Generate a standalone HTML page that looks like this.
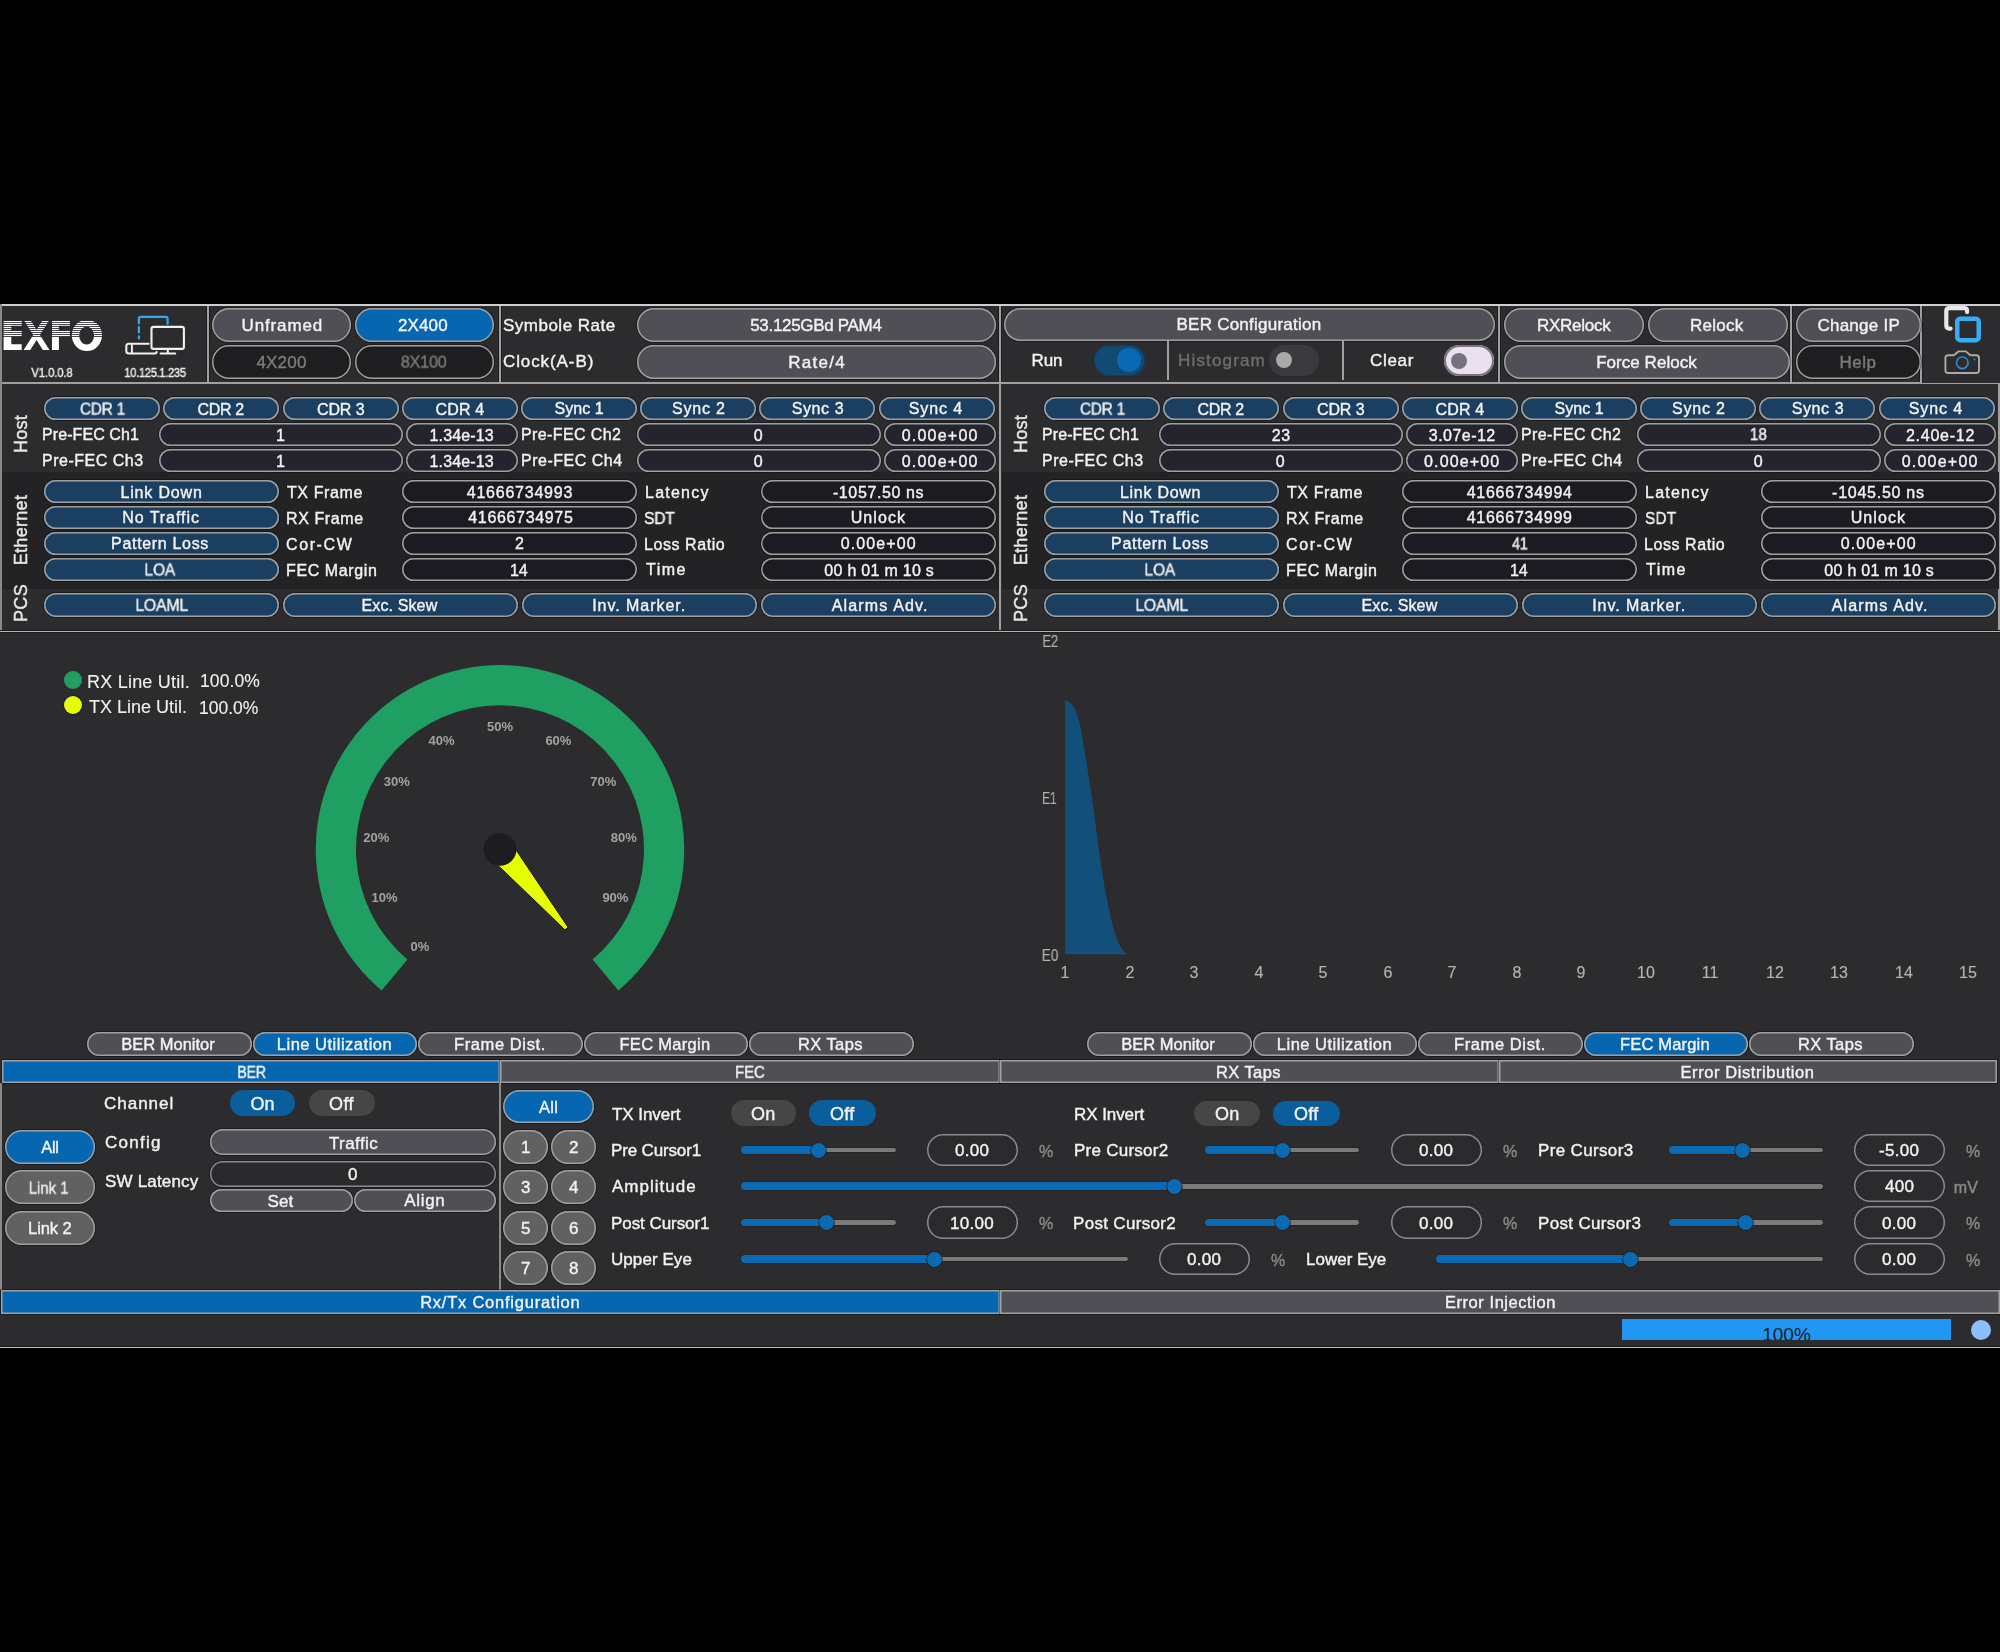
<!DOCTYPE html>
<html><head><meta charset="utf-8"><title>EXFO</title>
<style>
html,body{margin:0;padding:0;}
body{width:2000px;height:1652px;background:#000;position:relative;overflow:hidden;font-family:'Liberation Sans',sans-serif;}
.a{position:absolute;box-sizing:border-box;}
.p{display:flex;align-items:center;justify-content:center;white-space:nowrap;overflow:hidden;}
.p span,.t{-webkit-text-stroke:0.4px currentColor;will-change:transform;}
svg{will-change:transform;}
.t{white-space:nowrap;}
svg{position:absolute;left:0;top:0;}
</style></head><body>

<div class="a" style="left:0px;top:304px;width:2000px;height:1044px;background:#2c2c2f;"></div>
<div class="a" style="left:206.5px;top:306px;width:2px;height:75.5px;background:#a0a0a0;box-shadow:0 0 0 1px #1c1c20;"></div>
<div class="a" style="left:498.5px;top:306px;width:2px;height:75.5px;background:#a0a0a0;box-shadow:0 0 0 1px #1c1c20;"></div>
<div class="a" style="left:998.5px;top:306px;width:2px;height:75.5px;background:#a0a0a0;box-shadow:0 0 0 1px #1c1c20;"></div>
<div class="a" style="left:1498px;top:306px;width:2px;height:75.5px;background:#a0a0a0;box-shadow:0 0 0 1px #1c1c20;"></div>
<div class="a" style="left:1789.5px;top:306px;width:2px;height:75.5px;background:#a0a0a0;box-shadow:0 0 0 1px #1c1c20;"></div>
<div class="a" style="left:1919.5px;top:306px;width:2px;height:75.5px;background:#a0a0a0;box-shadow:0 0 0 1px #1c1c20;"></div>
<div class="a" style="left:0px;top:304px;width:2000px;height:1.5px;background:#cfcfcf;"></div>
<div class="a" style="left:0px;top:381.5px;width:1922px;height:2px;background:#a0a0a0;"></div>
<div class="a" style="left:1922px;top:382.5px;width:77.5px;height:1.5px;background:#a0a0a0;"></div>
<div class="a" style="left:0px;top:304px;width:2px;height:328px;background:#8a8a8a;"></div>
<div class="a" style="left:0px;top:1083px;width:2px;height:207px;background:#8a8a8a;"></div>
<svg width="2000" height="400" style="left:0;top:0">
<defs><mask id="lm"><rect x="0" y="337.3" width="110" height="20" fill="#fff"/><rect x="0" y="321.00" width="110" height="1.15" fill="#fff"/><rect x="0" y="323.00" width="110" height="1.15" fill="#fff"/><rect x="0" y="325.00" width="110" height="1.15" fill="#fff"/><rect x="0" y="327.00" width="110" height="1.15" fill="#fff"/><rect x="0" y="329.00" width="110" height="1.15" fill="#fff"/><rect x="0" y="331.00" width="110" height="1.15" fill="#fff"/><rect x="0" y="333.00" width="110" height="1.15" fill="#fff"/><rect x="0" y="335.00" width="110" height="1.15" fill="#fff"/><rect x="0" y="337.00" width="110" height="1.15" fill="#fff"/></mask></defs>
<g mask="url(#lm)" fill="#fff">
<path d="M3.6 320.25 H21.7 V325.75 H11.3 V331 H21.7 V336.5 H11.3 V344.2 H21.7 V350 H3.6 Z"/>
<path d="M23.9 320.25 H30.5 L49.5 350 H42.9 Z"/>
<path d="M42.6 320.25 H49.2 L30.2 350 H23.65 Z"/>
<path d="M52 320.25 H69.9 V325.75 H58.9 V331 H69.9 V336.5 H58.9 V350 H52 Z"/>
<path fill-rule="evenodd" d="M71.8 335.35 A15.1 15.65 0 1 0 102 335.35 A15.1 15.65 0 1 0 71.8 335.35 Z M79.2 335.55 A7.42 8.95 0 1 0 94.05 335.55 A7.42 8.95 0 1 0 79.2 335.55 Z"/>
</g>
<g fill="none" stroke-linecap="round" stroke-linejoin="round">
<path d="M138.9 323.3 V318.8 Q138.9 316.8 140.9 316.8 H165.6 Q167.6 316.8 167.6 318.8 V323.8" stroke="#2eaaf0" stroke-width="2.2"/>
<path d="M138.9 327 V332.5 M138.9 336.3 V338.4" stroke="#2eaaf0" stroke-width="2.2"/>
<rect x="151.5" y="326.9" width="32.4" height="22" rx="2" stroke="#f0f0f0" stroke-width="2.1"/>
<path d="M167.8 349.5 V353.4 M160.6 353.5 H175.2" stroke="#f0f0f0" stroke-width="2.1"/>
<path d="M148.6 343.7 H128.8 Q126.3 343.7 126.3 346.2 V351 Q126.3 353.5 128.8 353.5 H155 Q156.4 353.5 156.6 352" stroke="#f0f0f0" stroke-width="2.1"/>
<path d="M131.9 344 V353" stroke="#f0f0f0" stroke-width="1.9"/>
</g>
</svg>
<div class="a t" style="left:-247.75px;width:600px;text-align:center;top:366px;height:15px;line-height:15px;font-size:12.5px;color:#eaeaea;letter-spacing:-0.158px;font-weight:400;transform:scaleX(0.9114);transform-origin:center;">V1.0.0.8</div>
<div class="a t" style="left:-144.8px;width:600px;text-align:center;top:366px;height:15px;line-height:15px;font-size:12.5px;color:#eaeaea;letter-spacing:-0.373px;font-weight:400;transform:scaleX(0.8957);transform-origin:center;">10.125.1.235</div>
<div class="a p" style="left:212px;top:308px;width:139px;height:34px;background:#504f55;border-radius:17px;box-shadow:inset 0 0 0 1.5px #a0a0a0,0 0 0 1px rgba(0,0,0,.35);"><span style="font-size:17px;color:#f2f2f2;letter-spacing:0.863px;transform:translate(0.50px,1.35px);">Unframed</span></div>
<div class="a p" style="left:354.5px;top:308px;width:139.5px;height:34px;background:#0766b0;border-radius:17px;box-shadow:inset 0 0 0 1.5px #a0a0a0,0 0 0 1px rgba(0,0,0,.35);"><span style="font-size:17px;color:#f2f2f2;letter-spacing:0.150px;transform:translate(-1.10px,1.35px);">2X400</span></div>
<div class="a p" style="left:212px;top:345px;width:139px;height:33.5px;background:#1e1e20;border-radius:16.75px;box-shadow:inset 0 0 0 1.5px #a0a0a0,0 0 0 1px rgba(0,0,0,.35);"><span style="font-size:17px;color:#7c7c7c;letter-spacing:0.200px;transform:translate(0.40px,1.10px);">4X200</span></div>
<div class="a p" style="left:354.5px;top:345px;width:139.5px;height:33.5px;background:#1e1e20;border-radius:16.75px;box-shadow:inset 0 0 0 1.5px #a0a0a0,0 0 0 1px rgba(0,0,0,.35);"><span style="font-size:17px;color:#7c7c7c;letter-spacing:-0.350px;transform:translate(-1.10px,0.60px) scaleX(0.9646);">8X100</span></div>
<div class="a t" style="left:502.7px;top:316.27px;height:20.4px;line-height:20.4px;font-size:17px;color:#f2f2f2;letter-spacing:0.490px;font-weight:400;">Symbole Rate</div>
<div class="a t" style="left:502.5px;top:352.27px;height:20.4px;line-height:20.4px;font-size:17px;color:#f2f2f2;letter-spacing:0.902px;font-weight:400;">Clock(A-B)</div>
<div class="a p" style="left:637px;top:308px;width:359px;height:34px;background:#504f55;border-radius:17px;box-shadow:inset 0 0 0 1.5px #a0a0a0,0 0 0 1px rgba(0,0,0,.35);"><span style="font-size:17px;color:#f2f2f2;letter-spacing:-0.315px;transform:translate(-0.80px,1.35px);">53.125GBd PAM4</span></div>
<div class="a p" style="left:637px;top:345px;width:359px;height:33.5px;background:#504f55;border-radius:16.75px;box-shadow:inset 0 0 0 1.5px #a0a0a0,0 0 0 1px rgba(0,0,0,.35);"><span style="font-size:17px;color:#f2f2f2;letter-spacing:1.280px;transform:translate(0.20px,1.10px);">Rate/4</span></div>
<div class="a p" style="left:1004px;top:307.5px;width:491px;height:33.5px;background:#504f55;border-radius:16.75px;box-shadow:inset 0 0 0 1.5px #a0a0a0,0 0 0 1px rgba(0,0,0,.35);"><span style="font-size:17px;color:#f2f2f2;letter-spacing:0.238px;transform:translate(-0.50px,1.07px);">BER Configuration</span></div>
<div class="a" style="left:1166.5px;top:341px;width:2px;height:39px;background:#a0a0a0;"></div>
<div class="a" style="left:1342px;top:341px;width:2px;height:39px;background:#a0a0a0;"></div>
<div class="a t" style="left:747.1px;width:600px;text-align:center;top:350.8px;height:20.4px;line-height:20.4px;font-size:17px;color:#f2f2f2;letter-spacing:-0.100px;font-weight:400;">Run</div>
<div class="a" style="left:1094px;top:344.5px;width:51px;height:31px;border-radius:16px;background:#134a73;box-shadow:inset 0 0 0 1px #0f3d60;"></div>
<div class="a" style="left:1117px;top:348px;width:24px;height:24px;border-radius:50%;background:#0a69b3;"></div>
<div class="a t" style="left:921.6px;width:600px;text-align:center;top:351.27px;height:20.4px;line-height:20.4px;font-size:17px;color:#6e6e6e;letter-spacing:1.150px;font-weight:400;">Histogram</div>
<div class="a" style="left:1269px;top:344.5px;width:50px;height:31px;border-radius:16px;background:#3a393e;"></div>
<div class="a" style="left:1276px;top:352px;width:16px;height:16px;border-radius:50%;background:#a9a9a9;"></div>
<div class="a t" style="left:1091.5px;width:600px;text-align:center;top:350.8px;height:20.4px;line-height:20.4px;font-size:17px;color:#f2f2f2;letter-spacing:0.700px;font-weight:400;">Clear</div>
<div class="a" style="left:1444px;top:345px;width:50px;height:30.5px;border-radius:16px;background:#e9e1ee;box-shadow:inset 0 0 0 2px #7a7480;"></div>
<div class="a" style="left:1451px;top:352.5px;width:16px;height:16px;border-radius:50%;background:#77717d;"></div>
<div class="a p" style="left:1504px;top:308px;width:140px;height:34px;background:#504f55;border-radius:17px;box-shadow:inset 0 0 0 1.5px #a0a0a0,0 0 0 1px rgba(0,0,0,.35);"><span style="font-size:17px;color:#f2f2f2;letter-spacing:-0.271px;transform:translate(0.00px,1.35px);">RXRelock</span></div>
<div class="a p" style="left:1647.5px;top:308px;width:140.5px;height:34px;background:#504f55;border-radius:17px;box-shadow:inset 0 0 0 1.5px #a0a0a0,0 0 0 1px rgba(0,0,0,.35);"><span style="font-size:17px;color:#f2f2f2;letter-spacing:0.260px;transform:translate(-1.10px,1.35px);">Relock</span></div>
<div class="a p" style="left:1504px;top:345px;width:286px;height:33.5px;background:#504f55;border-radius:16.75px;box-shadow:inset 0 0 0 1.5px #a0a0a0,0 0 0 1px rgba(0,0,0,.35);"><span style="font-size:17px;color:#f2f2f2;letter-spacing:0.038px;transform:translate(-0.80px,1.10px);">Force Relock</span></div>
<div class="a p" style="left:1796px;top:308px;width:124.5px;height:34px;background:#504f55;border-radius:17px;box-shadow:inset 0 0 0 1.5px #a0a0a0,0 0 0 1px rgba(0,0,0,.35);"><span style="font-size:17px;color:#f2f2f2;letter-spacing:0.250px;transform:translate(0.40px,0.82px);">Change IP</span></div>
<div class="a p" style="left:1796px;top:345px;width:124.5px;height:33.5px;background:#1e1e20;border-radius:16.75px;box-shadow:inset 0 0 0 1.5px #a0a0a0,0 0 0 1px rgba(0,0,0,.35);"><span style="font-size:17px;color:#7c7c7c;letter-spacing:0.570px;transform:translate(-0.60px,0.57px);">Help</span></div>
<svg width="2000" height="400" style="left:0;top:0">
<path d="M1950.6 328.6 H1949.3 Q1946.3 328.6 1946.3 325.6 V311.1 Q1946.3 308.1 1949.3 308.1 H1964.1 Q1967.1 308.1 1967.1 311.1 V312.1" fill="none" stroke="#e8e8e8" stroke-width="4.2" stroke-linecap="round"/>
<rect x="1957.25" y="318.65" width="21.5" height="21.5" rx="3" fill="#2c2c2f" stroke="#38adf5" stroke-width="4.5"/>
<path d="M1945.4 358 Q1945.4 355.2 1948.2 355.2 H1953.8 L1958.4 351.4 H1965.9 L1970.3 355.2 H1976.2 Q1979 355.2 1979 358 V370.2 Q1979 373 1976.2 373 H1948.2 Q1945.4 373 1945.4 370.2 Z" fill="none" stroke="#ababab" stroke-width="1.9" stroke-linejoin="round"/>
<circle cx="1962.3" cy="362.8" r="5.8" fill="none" stroke="#2a90d8" stroke-width="1.6"/>
<circle cx="1974.5" cy="359.5" r="0.9" fill="#2a90d8"/>
</svg>
<div class="a" style="left:999px;top:383px;width:2px;height:248px;background:#a0a0a0;"></div>
<div class="a" style="left:1997.5px;top:382.5px;width:2px;height:249px;background:#a0a0a0;"></div>
<div class="a" style="left:0px;top:631px;width:2000px;height:1px;background:#b4b4b4;box-shadow:0 1px 0 #1c1c1f,0 -1px 0 #1c1c1f;"></div>
<div class="a" style="left:2px;top:472px;width:997px;height:117px;background:#232325;"></div>
<div class="a t" style="left:-39px;top:423.5px;width:120px;height:20px;line-height:20px;text-align:center;font-size:18px;color:#e6e6e6;letter-spacing:0.3px;transform:rotate(-90deg);">Host</div>
<div class="a t" style="left:-39px;top:520px;width:120px;height:20px;line-height:20px;text-align:center;font-size:18px;color:#e6e6e6;letter-spacing:0.3px;transform:rotate(-90deg);">Ethernet</div>
<div class="a t" style="left:-39px;top:593px;width:120px;height:20px;line-height:20px;text-align:center;font-size:18px;color:#e6e6e6;letter-spacing:0.3px;transform:rotate(-90deg);">PCS</div>
<div class="a p" style="left:44.1px;top:396.5px;width:116.1px;height:23.5px;background:#1b3f60;border-radius:11.75px;box-shadow:inset 0 0 0 1.5px #a0a0a0,0 0 0 1px rgba(0,0,0,.35);"><span style="font-size:16px;color:#f2f2f2;letter-spacing:-0.250px;transform:translate(0.10px,1.60px) scaleX(0.9653);">CDR 1</span></div>
<div class="a p" style="left:163.3px;top:396.5px;width:116.1px;height:23.5px;background:#1b3f60;border-radius:11.75px;box-shadow:inset 0 0 0 1.5px #a0a0a0,0 0 0 1px rgba(0,0,0,.35);"><span style="font-size:16px;color:#f2f2f2;letter-spacing:-0.352px;transform:translate(-0.43px,1.60px);">CDR 2</span></div>
<div class="a p" style="left:282.5px;top:396.5px;width:116.1px;height:23.5px;background:#1b3f60;border-radius:11.75px;box-shadow:inset 0 0 0 1.5px #a0a0a0,0 0 0 1px rgba(0,0,0,.35);"><span style="font-size:16px;color:#f2f2f2;letter-spacing:-0.102px;transform:translate(-0.05px,1.60px);">CDR 3</span></div>
<div class="a p" style="left:401.7px;top:396.5px;width:116.1px;height:23.5px;background:#1b3f60;border-radius:11.75px;box-shadow:inset 0 0 0 1.5px #a0a0a0,0 0 0 1px rgba(0,0,0,.35);"><span style="font-size:16px;color:#f2f2f2;letter-spacing:0.150px;transform:translate(0.50px,1.60px);">CDR 4</span></div>
<div class="a p" style="left:520.9px;top:396.5px;width:116.1px;height:23.5px;background:#1b3f60;border-radius:11.75px;box-shadow:inset 0 0 0 1.5px #a0a0a0,0 0 0 1px rgba(0,0,0,.35);"><span style="font-size:16px;color:#f2f2f2;letter-spacing:0.080px;transform:translate(0.40px,1.22px);">Sync 1</span></div>
<div class="a p" style="left:640.1px;top:396.5px;width:116.1px;height:23.5px;background:#1b3f60;border-radius:11.75px;box-shadow:inset 0 0 0 1.5px #a0a0a0,0 0 0 1px rgba(0,0,0,.35);"><span style="font-size:16px;color:#f2f2f2;letter-spacing:0.800px;transform:translate(1.00px,1.22px);">Sync 2</span></div>
<div class="a p" style="left:759.3px;top:396.5px;width:116.1px;height:23.5px;background:#1b3f60;border-radius:11.75px;box-shadow:inset 0 0 0 1.5px #a0a0a0,0 0 0 1px rgba(0,0,0,.35);"><span style="font-size:16px;color:#f2f2f2;letter-spacing:0.600px;transform:translate(0.70px,1.22px);">Sync 3</span></div>
<div class="a p" style="left:878.5px;top:396.5px;width:116.1px;height:23.5px;background:#1b3f60;border-radius:11.75px;box-shadow:inset 0 0 0 1.5px #a0a0a0,0 0 0 1px rgba(0,0,0,.35);"><span style="font-size:16px;color:#f2f2f2;letter-spacing:0.920px;transform:translate(-0.30px,1.22px);">Sync 4</span></div>
<div class="a t" style="left:42px;top:424.9px;height:19.2px;line-height:19.2px;font-size:16px;color:#f2f2f2;letter-spacing:0.080px;font-weight:400;">Pre-FEC Ch1</div>
<div class="a p" style="left:158.5px;top:422.5px;width:244px;height:23.5px;background:#25232e;border-radius:11.75px;box-shadow:inset 0 0 0 1.5px #a0a0a0,0 0 0 1px rgba(0,0,0,.35);"><span style="font-size:16px;color:#f2f2f2;letter-spacing:0.200px;transform:translate(0.00px,1.60px);">1</span></div>
<div class="a p" style="left:405.5px;top:422.5px;width:112px;height:23.5px;background:#25232e;border-radius:11.75px;box-shadow:inset 0 0 0 1.5px #a0a0a0,0 0 0 1px rgba(0,0,0,.35);"><span style="font-size:16px;color:#f2f2f2;letter-spacing:0.143px;transform:translate(0.50px,1.60px);">1.34e-13</span></div>
<div class="a t" style="left:520.7px;top:424.9px;height:19.2px;line-height:19.2px;font-size:16px;color:#f2f2f2;letter-spacing:0.380px;font-weight:400;">Pre-FEC Ch2</div>
<div class="a p" style="left:637px;top:422.5px;width:243.5px;height:23.5px;background:#25232e;border-radius:11.75px;box-shadow:inset 0 0 0 1.5px #a0a0a0,0 0 0 1px rgba(0,0,0,.35);"><span style="font-size:16px;color:#f2f2f2;letter-spacing:0.200px;transform:translate(-0.30px,1.60px);">0</span></div>
<div class="a p" style="left:883.5px;top:422.5px;width:112.5px;height:23.5px;background:#25232e;border-radius:11.75px;box-shadow:inset 0 0 0 1.5px #a0a0a0,0 0 0 1px rgba(0,0,0,.35);"><span style="font-size:16px;color:#f2f2f2;letter-spacing:1.224px;transform:translate(0.70px,1.60px);">0.00e+00</span></div>
<div class="a t" style="left:41.5px;top:450.9px;height:19.2px;line-height:19.2px;font-size:16px;color:#f2f2f2;letter-spacing:0.500px;font-weight:400;">Pre-FEC Ch3</div>
<div class="a p" style="left:158.5px;top:448.5px;width:244px;height:23.5px;background:#25232e;border-radius:11.75px;box-shadow:inset 0 0 0 1.5px #a0a0a0,0 0 0 1px rgba(0,0,0,.35);"><span style="font-size:16px;color:#f2f2f2;letter-spacing:0.200px;transform:translate(0.00px,1.60px);">1</span></div>
<div class="a p" style="left:405.5px;top:448.5px;width:112px;height:23.5px;background:#25232e;border-radius:11.75px;box-shadow:inset 0 0 0 1.5px #a0a0a0,0 0 0 1px rgba(0,0,0,.35);"><span style="font-size:16px;color:#f2f2f2;letter-spacing:0.143px;transform:translate(0.50px,1.60px);">1.34e-13</span></div>
<div class="a t" style="left:521.3px;top:450.9px;height:19.2px;line-height:19.2px;font-size:16px;color:#f2f2f2;letter-spacing:0.500px;font-weight:400;">Pre-FEC Ch4</div>
<div class="a p" style="left:637px;top:448.5px;width:243.5px;height:23.5px;background:#25232e;border-radius:11.75px;box-shadow:inset 0 0 0 1.5px #a0a0a0,0 0 0 1px rgba(0,0,0,.35);"><span style="font-size:16px;color:#f2f2f2;letter-spacing:0.200px;transform:translate(-0.30px,1.60px);">0</span></div>
<div class="a p" style="left:883.5px;top:448.5px;width:112.5px;height:23.5px;background:#25232e;border-radius:11.75px;box-shadow:inset 0 0 0 1.5px #a0a0a0,0 0 0 1px rgba(0,0,0,.35);"><span style="font-size:16px;color:#f2f2f2;letter-spacing:1.224px;transform:translate(0.70px,1.60px);">0.00e+00</span></div>
<div class="a p" style="left:43.5px;top:480px;width:235px;height:23.3px;background:#1b3f60;border-radius:11.65px;box-shadow:inset 0 0 0 1.5px #a0a0a0,0 0 0 1px rgba(0,0,0,.35);"><span style="font-size:16px;color:#f2f2f2;letter-spacing:0.838px;transform:translate(0.40px,1.20px);">Link Down</span></div>
<div class="a t" style="left:287.18px;top:482.9px;height:19.2px;line-height:19.2px;font-size:16px;color:#f2f2f2;letter-spacing:0.599px;font-weight:400;">TX Frame</div>
<div class="a p" style="left:402px;top:480px;width:234.5px;height:23.3px;background:#1c1b21;border-radius:11.65px;box-shadow:inset 0 0 0 1.5px #a0a0a0,0 0 0 1px rgba(0,0,0,.35);"><span style="font-size:16px;color:#f2f2f2;letter-spacing:0.760px;transform:translate(0.80px,1.20px);">41666734993</span></div>
<div class="a t" style="left:644.6px;top:482.52px;height:19.2px;line-height:19.2px;font-size:16px;color:#f2f2f2;letter-spacing:1.234px;font-weight:400;">Latency</div>
<div class="a p" style="left:761px;top:480px;width:235px;height:23.3px;background:#1c1b21;border-radius:11.65px;box-shadow:inset 0 0 0 1.5px #a0a0a0,0 0 0 1px rgba(0,0,0,.35);"><span style="font-size:16px;color:#f2f2f2;letter-spacing:0.620px;transform:translate(-0.10px,1.20px);">-1057.50 ns</span></div>
<div class="a p" style="left:43.5px;top:505.9px;width:235px;height:23.3px;background:#1b3f60;border-radius:11.65px;box-shadow:inset 0 0 0 1.5px #a0a0a0,0 0 0 1px rgba(0,0,0,.35);"><span style="font-size:16px;color:#f2f2f2;letter-spacing:0.945px;transform:translate(0.20px,0.30px);">No Traffic</span></div>
<div class="a t" style="left:286.18px;top:508.9px;height:19.2px;line-height:19.2px;font-size:16px;color:#f2f2f2;letter-spacing:0.599px;font-weight:400;">RX Frame</div>
<div class="a p" style="left:402px;top:505.9px;width:234.5px;height:23.3px;background:#1c1b21;border-radius:11.65px;box-shadow:inset 0 0 0 1.5px #a0a0a0,0 0 0 1px rgba(0,0,0,.35);"><span style="font-size:16px;color:#f2f2f2;letter-spacing:0.660px;transform:translate(1.30px,0.30px);">41666734975</span></div>
<div class="a t" style="left:644.2px;top:508.9px;height:19.2px;line-height:19.2px;font-size:16px;color:#f2f2f2;letter-spacing:-0.200px;font-weight:400;transform:scaleX(0.9767);transform-origin:left;">SDT</div>
<div class="a p" style="left:761px;top:505.9px;width:235px;height:23.3px;background:#1c1b21;border-radius:11.65px;box-shadow:inset 0 0 0 1.5px #a0a0a0,0 0 0 1px rgba(0,0,0,.35);"><span style="font-size:16px;color:#f2f2f2;letter-spacing:1.080px;transform:translate(-0.30px,0.30px);">Unlock</span></div>
<div class="a p" style="left:43.5px;top:531.8px;width:235px;height:23.3px;background:#1b3f60;border-radius:11.65px;box-shadow:inset 0 0 0 1.5px #a0a0a0,0 0 0 1px rgba(0,0,0,.35);"><span style="font-size:16px;color:#f2f2f2;letter-spacing:0.671px;transform:translate(-0.90px,1.40px);">Pattern Loss</span></div>
<div class="a t" style="left:285.6px;top:534.9px;height:19.2px;line-height:19.2px;font-size:16px;color:#f2f2f2;letter-spacing:1.600px;font-weight:400;">Cor-CW</div>
<div class="a p" style="left:402px;top:531.8px;width:234.5px;height:23.3px;background:#1c1b21;border-radius:11.65px;box-shadow:inset 0 0 0 1.5px #a0a0a0,0 0 0 1px rgba(0,0,0,.35);"><span style="font-size:16px;color:#f2f2f2;letter-spacing:0.400px;transform:translate(0.00px,1.40px);">2</span></div>
<div class="a t" style="left:643.8px;top:534.9px;height:19.2px;line-height:19.2px;font-size:16px;color:#f2f2f2;letter-spacing:0.564px;font-weight:400;">Loss Ratio</div>
<div class="a p" style="left:761px;top:531.8px;width:235px;height:23.3px;background:#1c1b21;border-radius:11.65px;box-shadow:inset 0 0 0 1.5px #a0a0a0,0 0 0 1px rgba(0,0,0,.35);"><span style="font-size:16px;color:#f2f2f2;letter-spacing:1.116px;transform:translate(0.70px,1.40px);">0.00e+00</span></div>
<div class="a p" style="left:43.5px;top:557.7px;width:235px;height:23.3px;background:#1b3f60;border-radius:11.65px;box-shadow:inset 0 0 0 1.5px #a0a0a0,0 0 0 1px rgba(0,0,0,.35);"><span style="font-size:16px;color:#f2f2f2;letter-spacing:0.000px;transform:translate(-1.20px,1.50px) scaleX(0.9667);">LOA</span></div>
<div class="a t" style="left:285.5px;top:560.52px;height:19.2px;line-height:19.2px;font-size:16px;color:#f2f2f2;letter-spacing:0.607px;font-weight:400;">FEC Margin</div>
<div class="a p" style="left:402px;top:557.7px;width:234.5px;height:23.3px;background:#1c1b21;border-radius:11.65px;box-shadow:inset 0 0 0 1.5px #a0a0a0,0 0 0 1px rgba(0,0,0,.35);"><span style="font-size:16px;color:#f2f2f2;letter-spacing:-0.200px;transform:translate(-0.90px,1.50px);">14</span></div>
<div class="a t" style="left:645.7px;top:559.9px;height:19.2px;line-height:19.2px;font-size:16px;color:#f2f2f2;letter-spacing:1.469px;font-weight:400;">Time</div>
<div class="a p" style="left:761px;top:557.7px;width:235px;height:23.3px;background:#1c1b21;border-radius:11.65px;box-shadow:inset 0 0 0 1.5px #a0a0a0,0 0 0 1px rgba(0,0,0,.35);"><span style="font-size:16px;color:#f2f2f2;letter-spacing:0.285px;transform:translate(0.30px,1.50px);">00 h 01 m 10 s</span></div>
<div class="a p" style="left:43.5px;top:593px;width:235px;height:24px;background:#1b3f60;border-radius:12px;box-shadow:inset 0 0 0 1.5px #a0a0a0,0 0 0 1px rgba(0,0,0,.35);"><span style="font-size:16px;color:#f2f2f2;letter-spacing:-0.275px;transform:translate(0.20px,0.85px) scaleX(0.9941);">LOAML</span></div>
<div class="a p" style="left:282.5px;top:593px;width:235px;height:24px;background:#1b3f60;border-radius:12px;box-shadow:inset 0 0 0 1.5px #a0a0a0,0 0 0 1px rgba(0,0,0,.35);"><span style="font-size:16px;color:#f2f2f2;letter-spacing:0.126px;transform:translate(-0.50px,1.35px);">Exc. Skew</span></div>
<div class="a p" style="left:521.5px;top:593px;width:235px;height:24px;background:#1b3f60;border-radius:12px;box-shadow:inset 0 0 0 1.5px #a0a0a0,0 0 0 1px rgba(0,0,0,.35);"><span style="font-size:16px;color:#f2f2f2;letter-spacing:0.966px;transform:translate(0.20px,1.35px);">Inv. Marker.</span></div>
<div class="a p" style="left:761px;top:593px;width:235px;height:24px;background:#1b3f60;border-radius:12px;box-shadow:inset 0 0 0 1.5px #a0a0a0,0 0 0 1px rgba(0,0,0,.35);"><span style="font-size:16px;color:#f2f2f2;letter-spacing:1.160px;transform:translate(1.70px,1.35px);">Alarms Adv.</span></div>
<div class="a" style="left:1002px;top:472px;width:997px;height:117px;background:#232325;"></div>
<div class="a t" style="left:961px;top:423.5px;width:120px;height:20px;line-height:20px;text-align:center;font-size:18px;color:#e6e6e6;letter-spacing:0.3px;transform:rotate(-90deg);">Host</div>
<div class="a t" style="left:961px;top:520px;width:120px;height:20px;line-height:20px;text-align:center;font-size:18px;color:#e6e6e6;letter-spacing:0.3px;transform:rotate(-90deg);">Ethernet</div>
<div class="a t" style="left:961px;top:593px;width:120px;height:20px;line-height:20px;text-align:center;font-size:18px;color:#e6e6e6;letter-spacing:0.3px;transform:rotate(-90deg);">PCS</div>
<div class="a p" style="left:1044.1px;top:396.5px;width:116.1px;height:23.5px;background:#1b3f60;border-radius:11.75px;box-shadow:inset 0 0 0 1.5px #a0a0a0,0 0 0 1px rgba(0,0,0,.35);"><span style="font-size:16px;color:#f2f2f2;letter-spacing:-0.250px;transform:translate(0.10px,1.60px) scaleX(0.9653);">CDR 1</span></div>
<div class="a p" style="left:1163.3px;top:396.5px;width:116.1px;height:23.5px;background:#1b3f60;border-radius:11.75px;box-shadow:inset 0 0 0 1.5px #a0a0a0,0 0 0 1px rgba(0,0,0,.35);"><span style="font-size:16px;color:#f2f2f2;letter-spacing:-0.352px;transform:translate(-0.43px,1.60px);">CDR 2</span></div>
<div class="a p" style="left:1282.5px;top:396.5px;width:116.1px;height:23.5px;background:#1b3f60;border-radius:11.75px;box-shadow:inset 0 0 0 1.5px #a0a0a0,0 0 0 1px rgba(0,0,0,.35);"><span style="font-size:16px;color:#f2f2f2;letter-spacing:-0.102px;transform:translate(-0.05px,1.60px);">CDR 3</span></div>
<div class="a p" style="left:1401.7px;top:396.5px;width:116.1px;height:23.5px;background:#1b3f60;border-radius:11.75px;box-shadow:inset 0 0 0 1.5px #a0a0a0,0 0 0 1px rgba(0,0,0,.35);"><span style="font-size:16px;color:#f2f2f2;letter-spacing:0.150px;transform:translate(0.50px,1.60px);">CDR 4</span></div>
<div class="a p" style="left:1520.9px;top:396.5px;width:116.1px;height:23.5px;background:#1b3f60;border-radius:11.75px;box-shadow:inset 0 0 0 1.5px #a0a0a0,0 0 0 1px rgba(0,0,0,.35);"><span style="font-size:16px;color:#f2f2f2;letter-spacing:0.080px;transform:translate(0.40px,1.22px);">Sync 1</span></div>
<div class="a p" style="left:1640.1px;top:396.5px;width:116.1px;height:23.5px;background:#1b3f60;border-radius:11.75px;box-shadow:inset 0 0 0 1.5px #a0a0a0,0 0 0 1px rgba(0,0,0,.35);"><span style="font-size:16px;color:#f2f2f2;letter-spacing:0.800px;transform:translate(1.00px,1.22px);">Sync 2</span></div>
<div class="a p" style="left:1759.3px;top:396.5px;width:116.1px;height:23.5px;background:#1b3f60;border-radius:11.75px;box-shadow:inset 0 0 0 1.5px #a0a0a0,0 0 0 1px rgba(0,0,0,.35);"><span style="font-size:16px;color:#f2f2f2;letter-spacing:0.600px;transform:translate(0.70px,1.22px);">Sync 3</span></div>
<div class="a p" style="left:1878.5px;top:396.5px;width:116.1px;height:23.5px;background:#1b3f60;border-radius:11.75px;box-shadow:inset 0 0 0 1.5px #a0a0a0,0 0 0 1px rgba(0,0,0,.35);"><span style="font-size:16px;color:#f2f2f2;letter-spacing:0.920px;transform:translate(-0.30px,1.22px);">Sync 4</span></div>
<div class="a t" style="left:1042px;top:424.9px;height:19.2px;line-height:19.2px;font-size:16px;color:#f2f2f2;letter-spacing:0.080px;font-weight:400;">Pre-FEC Ch1</div>
<div class="a p" style="left:1158.5px;top:422.5px;width:244px;height:23.5px;background:#25232e;border-radius:11.75px;box-shadow:inset 0 0 0 1.5px #a0a0a0,0 0 0 1px rgba(0,0,0,.35);"><span style="font-size:16px;color:#f2f2f2;letter-spacing:0.600px;transform:translate(0.80px,1.60px);">23</span></div>
<div class="a p" style="left:1405.5px;top:422.5px;width:112px;height:23.5px;background:#25232e;border-radius:11.75px;box-shadow:inset 0 0 0 1.5px #a0a0a0,0 0 0 1px rgba(0,0,0,.35);"><span style="font-size:16px;color:#f2f2f2;letter-spacing:0.459px;transform:translate(0.80px,1.60px);">3.07e-12</span></div>
<div class="a t" style="left:1520.7px;top:424.9px;height:19.2px;line-height:19.2px;font-size:16px;color:#f2f2f2;letter-spacing:0.380px;font-weight:400;">Pre-FEC Ch2</div>
<div class="a p" style="left:1637px;top:422.5px;width:243.5px;height:23.5px;background:#25232e;border-radius:11.75px;box-shadow:inset 0 0 0 1.5px #a0a0a0,0 0 0 1px rgba(0,0,0,.35);"><span style="font-size:16px;color:#f2f2f2;letter-spacing:0.100px;transform:translate(-0.60px,1.10px) scaleX(0.9562);">18</span></div>
<div class="a p" style="left:1883.5px;top:422.5px;width:112.5px;height:23.5px;background:#25232e;border-radius:11.75px;box-shadow:inset 0 0 0 1.5px #a0a0a0,0 0 0 1px rgba(0,0,0,.35);"><span style="font-size:16px;color:#f2f2f2;letter-spacing:0.765px;transform:translate(0.90px,1.60px);">2.40e-12</span></div>
<div class="a t" style="left:1041.5px;top:450.9px;height:19.2px;line-height:19.2px;font-size:16px;color:#f2f2f2;letter-spacing:0.500px;font-weight:400;">Pre-FEC Ch3</div>
<div class="a p" style="left:1158.5px;top:448.5px;width:244px;height:23.5px;background:#25232e;border-radius:11.75px;box-shadow:inset 0 0 0 1.5px #a0a0a0,0 0 0 1px rgba(0,0,0,.35);"><span style="font-size:16px;color:#f2f2f2;letter-spacing:0.200px;transform:translate(-0.30px,1.60px);">0</span></div>
<div class="a p" style="left:1405.5px;top:448.5px;width:112px;height:23.5px;background:#25232e;border-radius:11.75px;box-shadow:inset 0 0 0 1.5px #a0a0a0,0 0 0 1px rgba(0,0,0,.35);"><span style="font-size:16px;color:#f2f2f2;letter-spacing:1.143px;transform:translate(1.00px,1.60px);">0.00e+00</span></div>
<div class="a t" style="left:1521.3px;top:450.9px;height:19.2px;line-height:19.2px;font-size:16px;color:#f2f2f2;letter-spacing:0.500px;font-weight:400;">Pre-FEC Ch4</div>
<div class="a p" style="left:1637px;top:448.5px;width:243.5px;height:23.5px;background:#25232e;border-radius:11.75px;box-shadow:inset 0 0 0 1.5px #a0a0a0,0 0 0 1px rgba(0,0,0,.35);"><span style="font-size:16px;color:#f2f2f2;letter-spacing:0.200px;transform:translate(-0.30px,1.60px);">0</span></div>
<div class="a p" style="left:1883.5px;top:448.5px;width:112.5px;height:23.5px;background:#25232e;border-radius:11.75px;box-shadow:inset 0 0 0 1.5px #a0a0a0,0 0 0 1px rgba(0,0,0,.35);"><span style="font-size:16px;color:#f2f2f2;letter-spacing:1.224px;transform:translate(0.70px,1.60px);">0.00e+00</span></div>
<div class="a p" style="left:1043.5px;top:480px;width:235px;height:23.3px;background:#1b3f60;border-radius:11.65px;box-shadow:inset 0 0 0 1.5px #a0a0a0,0 0 0 1px rgba(0,0,0,.35);"><span style="font-size:16px;color:#f2f2f2;letter-spacing:0.737px;transform:translate(-0.10px,1.20px);">Link Down</span></div>
<div class="a t" style="left:1287.42px;top:482.9px;height:19.2px;line-height:19.2px;font-size:16px;color:#f2f2f2;letter-spacing:0.599px;font-weight:400;">TX Frame</div>
<div class="a p" style="left:1402px;top:480px;width:234.5px;height:23.3px;background:#1c1b21;border-radius:11.65px;box-shadow:inset 0 0 0 1.5px #a0a0a0,0 0 0 1px rgba(0,0,0,.35);"><span style="font-size:16px;color:#f2f2f2;letter-spacing:0.740px;transform:translate(0.70px,1.20px);">41666734994</span></div>
<div class="a t" style="left:1644.6px;top:482.52px;height:19.2px;line-height:19.2px;font-size:16px;color:#f2f2f2;letter-spacing:1.234px;font-weight:400;">Latency</div>
<div class="a p" style="left:1761px;top:480px;width:235px;height:23.3px;background:#1c1b21;border-radius:11.65px;box-shadow:inset 0 0 0 1.5px #a0a0a0,0 0 0 1px rgba(0,0,0,.35);"><span style="font-size:16px;color:#f2f2f2;letter-spacing:0.740px;transform:translate(0.10px,1.20px);">-1045.50 ns</span></div>
<div class="a p" style="left:1043.5px;top:505.9px;width:235px;height:23.3px;background:#1b3f60;border-radius:11.65px;box-shadow:inset 0 0 0 1.5px #a0a0a0,0 0 0 1px rgba(0,0,0,.35);"><span style="font-size:16px;color:#f2f2f2;letter-spacing:0.945px;transform:translate(0.20px,0.30px);">No Traffic</span></div>
<div class="a t" style="left:1286.42px;top:508.9px;height:19.2px;line-height:19.2px;font-size:16px;color:#f2f2f2;letter-spacing:0.599px;font-weight:400;">RX Frame</div>
<div class="a p" style="left:1402px;top:505.9px;width:234.5px;height:23.3px;background:#1c1b21;border-radius:11.65px;box-shadow:inset 0 0 0 1.5px #a0a0a0,0 0 0 1px rgba(0,0,0,.35);"><span style="font-size:16px;color:#f2f2f2;letter-spacing:0.740px;transform:translate(0.70px,0.30px);">41666734999</span></div>
<div class="a t" style="left:1644.7px;top:508.9px;height:19.2px;line-height:19.2px;font-size:16px;color:#f2f2f2;letter-spacing:0.300px;font-weight:400;transform:scaleX(0.9539);transform-origin:left;">SDT</div>
<div class="a p" style="left:1761px;top:505.9px;width:235px;height:23.3px;background:#1c1b21;border-radius:11.65px;box-shadow:inset 0 0 0 1.5px #a0a0a0,0 0 0 1px rgba(0,0,0,.35);"><span style="font-size:16px;color:#f2f2f2;letter-spacing:1.080px;transform:translate(-0.30px,0.30px);">Unlock</span></div>
<div class="a p" style="left:1043.5px;top:531.8px;width:235px;height:23.3px;background:#1b3f60;border-radius:11.65px;box-shadow:inset 0 0 0 1.5px #a0a0a0,0 0 0 1px rgba(0,0,0,.35);"><span style="font-size:16px;color:#f2f2f2;letter-spacing:0.671px;transform:translate(-0.90px,1.40px);">Pattern Loss</span></div>
<div class="a t" style="left:1285.6px;top:534.9px;height:19.2px;line-height:19.2px;font-size:16px;color:#f2f2f2;letter-spacing:1.600px;font-weight:400;">Cor-CW</div>
<div class="a p" style="left:1402px;top:531.8px;width:234.5px;height:23.3px;background:#1c1b21;border-radius:11.65px;box-shadow:inset 0 0 0 1.5px #a0a0a0,0 0 0 1px rgba(0,0,0,.35);"><span style="font-size:16px;color:#f2f2f2;letter-spacing:-0.500px;transform:translate(0.30px,1.40px) scaleX(0.9095);">41</span></div>
<div class="a t" style="left:1643.8px;top:534.9px;height:19.2px;line-height:19.2px;font-size:16px;color:#f2f2f2;letter-spacing:0.564px;font-weight:400;">Loss Ratio</div>
<div class="a p" style="left:1761px;top:531.8px;width:235px;height:23.3px;background:#1c1b21;border-radius:11.65px;box-shadow:inset 0 0 0 1.5px #a0a0a0,0 0 0 1px rgba(0,0,0,.35);"><span style="font-size:16px;color:#f2f2f2;letter-spacing:1.116px;transform:translate(0.70px,1.40px);">0.00e+00</span></div>
<div class="a p" style="left:1043.5px;top:557.7px;width:235px;height:23.3px;background:#1b3f60;border-radius:11.65px;box-shadow:inset 0 0 0 1.5px #a0a0a0,0 0 0 1px rgba(0,0,0,.35);"><span style="font-size:16px;color:#f2f2f2;letter-spacing:0.000px;transform:translate(-1.20px,1.50px) scaleX(0.9667);">LOA</span></div>
<div class="a t" style="left:1285.5px;top:560.52px;height:19.2px;line-height:19.2px;font-size:16px;color:#f2f2f2;letter-spacing:0.607px;font-weight:400;">FEC Margin</div>
<div class="a p" style="left:1402px;top:557.7px;width:234.5px;height:23.3px;background:#1c1b21;border-radius:11.65px;box-shadow:inset 0 0 0 1.5px #a0a0a0,0 0 0 1px rgba(0,0,0,.35);"><span style="font-size:16px;color:#f2f2f2;letter-spacing:-0.200px;transform:translate(-0.90px,1.50px);">14</span></div>
<div class="a t" style="left:1645.7px;top:559.9px;height:19.2px;line-height:19.2px;font-size:16px;color:#f2f2f2;letter-spacing:1.469px;font-weight:400;">Time</div>
<div class="a p" style="left:1761px;top:557.7px;width:235px;height:23.3px;background:#1c1b21;border-radius:11.65px;box-shadow:inset 0 0 0 1.5px #a0a0a0,0 0 0 1px rgba(0,0,0,.35);"><span style="font-size:16px;color:#f2f2f2;letter-spacing:0.285px;transform:translate(0.30px,1.50px);">00 h 01 m 10 s</span></div>
<div class="a p" style="left:1043.5px;top:593px;width:235px;height:24px;background:#1b3f60;border-radius:12px;box-shadow:inset 0 0 0 1.5px #a0a0a0,0 0 0 1px rgba(0,0,0,.35);"><span style="font-size:16px;color:#f2f2f2;letter-spacing:-0.275px;transform:translate(0.20px,0.85px) scaleX(0.9941);">LOAML</span></div>
<div class="a p" style="left:1282.5px;top:593px;width:235px;height:24px;background:#1b3f60;border-radius:12px;box-shadow:inset 0 0 0 1.5px #a0a0a0,0 0 0 1px rgba(0,0,0,.35);"><span style="font-size:16px;color:#f2f2f2;letter-spacing:0.126px;transform:translate(-0.50px,1.35px);">Exc. Skew</span></div>
<div class="a p" style="left:1521.5px;top:593px;width:235px;height:24px;background:#1b3f60;border-radius:12px;box-shadow:inset 0 0 0 1.5px #a0a0a0,0 0 0 1px rgba(0,0,0,.35);"><span style="font-size:16px;color:#f2f2f2;letter-spacing:0.966px;transform:translate(0.20px,1.35px);">Inv. Marker.</span></div>
<div class="a p" style="left:1761px;top:593px;width:235px;height:24px;background:#1b3f60;border-radius:12px;box-shadow:inset 0 0 0 1.5px #a0a0a0,0 0 0 1px rgba(0,0,0,.35);"><span style="font-size:16px;color:#f2f2f2;letter-spacing:1.160px;transform:translate(1.70px,1.35px);">Alarms Adv.</span></div>
<div class="a" style="left:63.8px;top:670.5px;width:18px;height:18px;border-radius:50%;background:#1fa062;box-shadow:0 0 0 1px #3a2a30;"></div>
<div class="a" style="left:63.8px;top:696.4px;width:18px;height:18px;border-radius:50%;background:#e6ff00;box-shadow:0 0 0 1px #1c1c40;"></div>
<div class="a t" style="left:86.7px;top:671.7px;height:21.6px;line-height:21.6px;font-size:18px;color:#f0f0f0;letter-spacing:0.222px;font-weight:400;-webkit-text-stroke:0.1px currentColor;">RX Line Util.</div>
<div class="a t" style="left:200.1px;top:671px;height:21px;line-height:21px;font-size:17.5px;color:#f0f0f0;letter-spacing:0.080px;font-weight:400;-webkit-text-stroke:0.1px currentColor;">100.0%</div>
<div class="a t" style="left:89px;top:697.4px;height:21.6px;line-height:21.6px;font-size:18px;color:#f0f0f0;letter-spacing:0.000px;font-weight:400;-webkit-text-stroke:0.1px currentColor;">TX Line Util.</div>
<div class="a t" style="left:199px;top:697.7px;height:21px;line-height:21px;font-size:17.5px;color:#f0f0f0;letter-spacing:0.000px;font-weight:400;-webkit-text-stroke:0.1px currentColor;">100.0%</div>
<svg width="2000" height="1100" style="left:0;top:0">
<path d="M381.60 990.41 A184.2 184.2 0 1 1 618.40 990.41 L592.56 959.61 A144 144 0 1 0 407.44 959.61 Z" fill="#1fa062"/>
<text x="420.0" y="950.7" text-anchor="middle" font-family="Liberation Sans" font-weight="700" font-size="13" fill="#a3a3a3">0%</text><text x="384.6" y="901.9" text-anchor="middle" font-family="Liberation Sans" font-weight="700" font-size="13" fill="#a3a3a3">10%</text><text x="376.2" y="842.3" text-anchor="middle" font-family="Liberation Sans" font-weight="700" font-size="13" fill="#a3a3a3">20%</text><text x="396.8" y="785.7" text-anchor="middle" font-family="Liberation Sans" font-weight="700" font-size="13" fill="#a3a3a3">30%</text><text x="441.6" y="745.4" text-anchor="middle" font-family="Liberation Sans" font-weight="700" font-size="13" fill="#a3a3a3">40%</text><text x="500.0" y="730.8" text-anchor="middle" font-family="Liberation Sans" font-weight="700" font-size="13" fill="#a3a3a3">50%</text><text x="558.4" y="745.4" text-anchor="middle" font-family="Liberation Sans" font-weight="700" font-size="13" fill="#a3a3a3">60%</text><text x="603.2" y="785.7" text-anchor="middle" font-family="Liberation Sans" font-weight="700" font-size="13" fill="#a3a3a3">70%</text><text x="623.8" y="842.3" text-anchor="middle" font-family="Liberation Sans" font-weight="700" font-size="13" fill="#a3a3a3">80%</text><text x="615.4" y="901.9" text-anchor="middle" font-family="Liberation Sans" font-weight="700" font-size="13" fill="#a3a3a3">90%</text>
<polygon points="490.04,857.66 565.00,929.87 568.06,927.30 509.96,840.94" fill="#e6ff00" stroke="#1a1a3a" stroke-width="1"/>
<circle cx="500" cy="849.3" r="16.4" fill="#1d1c21"/>
</svg>
<div class="a t" style="left:750.25px;width:600px;text-align:center;top:632.4px;height:19.2px;line-height:19.2px;font-size:16px;color:#b4b4b4;letter-spacing:-0.500px;font-weight:400;-webkit-text-stroke:0.15px currentColor;transform:scaleX(0.8207);transform-origin:center;">E2</div>
<div class="a t" style="left:749px;width:600px;text-align:center;top:789.4px;height:19.2px;line-height:19.2px;font-size:16px;color:#b4b4b4;letter-spacing:-0.500px;font-weight:400;-webkit-text-stroke:0.15px currentColor;transform:scaleX(0.7570);transform-origin:center;">E1</div>
<div class="a t" style="left:749.5px;width:600px;text-align:center;top:946.4px;height:19.2px;line-height:19.2px;font-size:16px;color:#b4b4b4;letter-spacing:-0.100px;font-weight:400;-webkit-text-stroke:0.15px currentColor;transform:scaleX(0.8376);transform-origin:center;">E0</div>
<div class="a t" style="left:765.3px;width:600px;text-align:center;top:963.1px;height:19.2px;line-height:19.2px;font-size:16px;color:#b4b4b4;letter-spacing:0.000px;font-weight:400;-webkit-text-stroke:0.15px currentColor;">1</div>
<div class="a t" style="left:829.78px;width:600px;text-align:center;top:963.1px;height:19.2px;line-height:19.2px;font-size:16px;color:#b4b4b4;letter-spacing:0.000px;font-weight:400;-webkit-text-stroke:0.15px currentColor;">2</div>
<div class="a t" style="left:894.26px;width:600px;text-align:center;top:963.1px;height:19.2px;line-height:19.2px;font-size:16px;color:#b4b4b4;letter-spacing:0.000px;font-weight:400;-webkit-text-stroke:0.15px currentColor;">3</div>
<div class="a t" style="left:958.74px;width:600px;text-align:center;top:963.1px;height:19.2px;line-height:19.2px;font-size:16px;color:#b4b4b4;letter-spacing:0.000px;font-weight:400;-webkit-text-stroke:0.15px currentColor;">4</div>
<div class="a t" style="left:1023.22px;width:600px;text-align:center;top:963.1px;height:19.2px;line-height:19.2px;font-size:16px;color:#b4b4b4;letter-spacing:0.000px;font-weight:400;-webkit-text-stroke:0.15px currentColor;">5</div>
<div class="a t" style="left:1087.7px;width:600px;text-align:center;top:963.1px;height:19.2px;line-height:19.2px;font-size:16px;color:#b4b4b4;letter-spacing:0.000px;font-weight:400;-webkit-text-stroke:0.15px currentColor;">6</div>
<div class="a t" style="left:1152.18px;width:600px;text-align:center;top:963.1px;height:19.2px;line-height:19.2px;font-size:16px;color:#b4b4b4;letter-spacing:0.000px;font-weight:400;-webkit-text-stroke:0.15px currentColor;">7</div>
<div class="a t" style="left:1216.66px;width:600px;text-align:center;top:963.1px;height:19.2px;line-height:19.2px;font-size:16px;color:#b4b4b4;letter-spacing:0.000px;font-weight:400;-webkit-text-stroke:0.15px currentColor;">8</div>
<div class="a t" style="left:1281.14px;width:600px;text-align:center;top:963.1px;height:19.2px;line-height:19.2px;font-size:16px;color:#b4b4b4;letter-spacing:0.000px;font-weight:400;-webkit-text-stroke:0.15px currentColor;">9</div>
<div class="a t" style="left:1345.62px;width:600px;text-align:center;top:963.1px;height:19.2px;line-height:19.2px;font-size:16px;color:#b4b4b4;letter-spacing:0.000px;font-weight:400;-webkit-text-stroke:0.15px currentColor;">10</div>
<div class="a t" style="left:1410.1px;width:600px;text-align:center;top:963.1px;height:19.2px;line-height:19.2px;font-size:16px;color:#b4b4b4;letter-spacing:0.000px;font-weight:400;-webkit-text-stroke:0.15px currentColor;">11</div>
<div class="a t" style="left:1474.58px;width:600px;text-align:center;top:963.1px;height:19.2px;line-height:19.2px;font-size:16px;color:#b4b4b4;letter-spacing:0.000px;font-weight:400;-webkit-text-stroke:0.15px currentColor;">12</div>
<div class="a t" style="left:1539.06px;width:600px;text-align:center;top:963.1px;height:19.2px;line-height:19.2px;font-size:16px;color:#b4b4b4;letter-spacing:0.000px;font-weight:400;-webkit-text-stroke:0.15px currentColor;">13</div>
<div class="a t" style="left:1603.54px;width:600px;text-align:center;top:963.1px;height:19.2px;line-height:19.2px;font-size:16px;color:#b4b4b4;letter-spacing:0.000px;font-weight:400;-webkit-text-stroke:0.15px currentColor;">14</div>
<div class="a t" style="left:1668.02px;width:600px;text-align:center;top:963.1px;height:19.2px;line-height:19.2px;font-size:16px;color:#b4b4b4;letter-spacing:0.000px;font-weight:400;-webkit-text-stroke:0.15px currentColor;">15</div>
<svg width="2000" height="1100" style="left:0;top:0">
<path d="M1065 954.2 V701 C1071 701 1077 707 1081 730 C1086 758 1091 790 1095 820 C1099 852 1103 880 1108 905 C1113 930 1119 950 1127.5 954.2 Z" fill="#12507b"/>
</svg>
<div class="a p" style="left:87px;top:1032px;width:164.5px;height:24px;background:#504f55;border-radius:12px;box-shadow:inset 0 0 0 1.5px #a0a0a0,0 0 0 1px rgba(0,0,0,.35);"><span style="font-size:16.5px;color:#f2f2f2;letter-spacing:0.000px;transform:translate(-0.80px,0.35px);">BER Monitor</span></div>
<div class="a p" style="left:252.5px;top:1032px;width:164.5px;height:24px;background:#0766b0;border-radius:12px;box-shadow:inset 0 0 0 1.5px #a0a0a0,0 0 0 1px rgba(0,0,0,.35);"><span style="font-size:16.5px;color:#f2f2f2;letter-spacing:0.503px;transform:translate(-0.20px,0.35px);">Line Utilization</span></div>
<div class="a p" style="left:418px;top:1032px;width:164.5px;height:24px;background:#504f55;border-radius:12px;box-shadow:inset 0 0 0 1.5px #a0a0a0,0 0 0 1px rgba(0,0,0,.35);"><span style="font-size:16.5px;color:#f2f2f2;letter-spacing:0.600px;transform:translate(0.00px,0.35px);">Frame Dist.</span></div>
<div class="a p" style="left:583.5px;top:1032px;width:164.5px;height:24px;background:#504f55;border-radius:12px;box-shadow:inset 0 0 0 1.5px #a0a0a0,0 0 0 1px rgba(0,0,0,.35);"><span style="font-size:16.5px;color:#f2f2f2;letter-spacing:0.289px;transform:translate(-0.50px,0.44px);">FEC Margin</span></div>
<div class="a p" style="left:749px;top:1032px;width:164.5px;height:24px;background:#504f55;border-radius:12px;box-shadow:inset 0 0 0 1.5px #a0a0a0,0 0 0 1px rgba(0,0,0,.35);"><span style="font-size:16.5px;color:#f2f2f2;letter-spacing:0.400px;transform:translate(-1.00px,0.44px);">RX Taps</span></div>
<div class="a p" style="left:1087px;top:1032px;width:164.5px;height:24px;background:#504f55;border-radius:12px;box-shadow:inset 0 0 0 1.5px #a0a0a0,0 0 0 1px rgba(0,0,0,.35);"><span style="font-size:16.5px;color:#f2f2f2;letter-spacing:0.000px;transform:translate(-0.80px,0.35px);">BER Monitor</span></div>
<div class="a p" style="left:1252.5px;top:1032px;width:164.5px;height:24px;background:#504f55;border-radius:12px;box-shadow:inset 0 0 0 1.5px #a0a0a0,0 0 0 1px rgba(0,0,0,.35);"><span style="font-size:16.5px;color:#f2f2f2;letter-spacing:0.503px;transform:translate(-0.20px,0.35px);">Line Utilization</span></div>
<div class="a p" style="left:1418px;top:1032px;width:164.5px;height:24px;background:#504f55;border-radius:12px;box-shadow:inset 0 0 0 1.5px #a0a0a0,0 0 0 1px rgba(0,0,0,.35);"><span style="font-size:16.5px;color:#f2f2f2;letter-spacing:0.600px;transform:translate(0.00px,0.35px);">Frame Dist.</span></div>
<div class="a p" style="left:1583.5px;top:1032px;width:164.5px;height:24px;background:#0766b0;border-radius:12px;box-shadow:inset 0 0 0 1.5px #a0a0a0,0 0 0 1px rgba(0,0,0,.35);"><span style="font-size:16.5px;color:#f2f2f2;letter-spacing:0.178px;transform:translate(-1.00px,0.44px);">FEC Margin</span></div>
<div class="a p" style="left:1749px;top:1032px;width:164.5px;height:24px;background:#504f55;border-radius:12px;box-shadow:inset 0 0 0 1.5px #a0a0a0,0 0 0 1px rgba(0,0,0,.35);"><span style="font-size:16.5px;color:#f2f2f2;letter-spacing:0.400px;transform:translate(-1.00px,0.44px);">RX Taps</span></div>
<div class="a p" style="left:2px;top:1060px;width:498px;height:23px;background:#0766b0;border-radius:0px;box-shadow:inset 0 0 0 1.5px #a0a0a0,0 0 0 1px rgba(0,0,0,.35);"><span style="font-size:16.5px;color:#f2f2f2;letter-spacing:-0.250px;transform:translate(0.96px,0.85px) scaleX(0.8600);">BER</span></div>
<div class="a p" style="left:500px;top:1060px;width:500px;height:23px;background:#504f55;border-radius:0px;box-shadow:inset 0 0 0 1.5px #a0a0a0,0 0 0 1px rgba(0,0,0,.35);"><span style="font-size:16.5px;color:#f2f2f2;letter-spacing:-0.200px;transform:translate(-0.40px,0.85px) scaleX(0.9117);">FEC</span></div>
<div class="a p" style="left:1000px;top:1060px;width:499px;height:23px;background:#504f55;border-radius:0px;box-shadow:inset 0 0 0 1.5px #a0a0a0,0 0 0 1px rgba(0,0,0,.35);"><span style="font-size:16.5px;color:#f2f2f2;letter-spacing:0.400px;transform:translate(-1.00px,0.94px);">RX Taps</span></div>
<div class="a p" style="left:1499px;top:1060px;width:498px;height:23px;background:#504f55;border-radius:0px;box-shadow:inset 0 0 0 1.5px #a0a0a0,0 0 0 1px rgba(0,0,0,.35);"><span style="font-size:16.5px;color:#f2f2f2;letter-spacing:0.571px;transform:translate(-0.46px,0.85px);">Error Distribution</span></div>
<div class="a" style="left:499px;top:1083px;width:2px;height:207px;background:#8a8a8a;"></div>
<div class="a t" style="left:104.4px;top:1093.8px;height:20.4px;line-height:20.4px;font-size:17px;color:#f2f2f2;letter-spacing:0.983px;font-weight:400;">Channel</div>
<div class="a t" style="left:104.82px;top:1133.27px;height:20.4px;line-height:20.4px;font-size:17px;color:#f2f2f2;letter-spacing:1.260px;font-weight:400;">Config</div>
<div class="a t" style="left:104.7px;top:1172.27px;height:20.4px;line-height:20.4px;font-size:17px;color:#f2f2f2;letter-spacing:0.176px;font-weight:400;">SW Latency</div>
<div class="a p" style="left:229.5px;top:1090px;width:65.5px;height:26px;background:#0a5e9c;border-radius:13px;"><span style="font-size:18px;color:#f2f2f2;letter-spacing:0.100px;transform:translate(0.50px,0.85px);">On</span></div>
<div class="a p" style="left:308.5px;top:1090px;width:66.5px;height:26px;background:#464646;border-radius:13px;"><span style="font-size:18px;color:#f2f2f2;letter-spacing:0.400px;transform:translate(0.10px,0.85px);">Off</span></div>
<div class="a p" style="left:209.5px;top:1129px;width:286.5px;height:26.3px;background:#504f55;border-radius:13.15px;box-shadow:inset 0 0 0 1.5px #a0a0a0,0 0 0 1px rgba(0,0,0,.35);"><span style="font-size:17px;color:#f2f2f2;letter-spacing:0.437px;transform:translate(0.90px,1.70px);">Traffic</span></div>
<div class="a p" style="left:209.5px;top:1161.3px;width:286.5px;height:25.7px;background:#2a2a2d;border-radius:12.85px;box-shadow:inset 0 0 0 1.5px #8d8993,0 0 0 1px rgba(0,0,0,.35);"><span style="font-size:17px;color:#f2f2f2;letter-spacing:0.400px;transform:translate(0.00px,0.80px);">0</span></div>
<div class="a p" style="left:209.5px;top:1188.5px;width:143px;height:23.5px;background:#504f55;border-radius:11.75px;box-shadow:inset 0 0 0 1.5px #a0a0a0,0 0 0 1px rgba(0,0,0,.35);"><span style="font-size:17px;color:#f2f2f2;letter-spacing:0.000px;transform:translate(-0.40px,1.60px);">Set</span></div>
<div class="a p" style="left:353.5px;top:1188.5px;width:142.5px;height:23.5px;background:#504f55;border-radius:11.75px;box-shadow:inset 0 0 0 1.5px #a0a0a0,0 0 0 1px rgba(0,0,0,.35);"><span style="font-size:17px;color:#f2f2f2;letter-spacing:0.650px;transform:translate(0.30px,1.16px);">Align</span></div>
<div class="a p" style="left:4.5px;top:1130px;width:90.5px;height:33.8px;background:#0766b0;border-radius:16.9px;box-shadow:inset 0 0 0 1.5px #a0a0a0,0 0 0 1px rgba(0,0,0,.35);"><span style="font-size:16.5px;color:#f2f2f2;letter-spacing:-0.300px;transform:translate(0.20px,1.45px);">All</span></div>
<div class="a p" style="left:4.5px;top:1170px;width:90.5px;height:34.4px;background:#616161;border-radius:17.2px;box-shadow:inset 0 0 0 1.5px #a0a0a0,0 0 0 1px rgba(0,0,0,.35);"><span style="font-size:16.5px;color:#f2f2f2;letter-spacing:0.100px;transform:translate(-0.60px,0.65px) scaleX(0.8950);">Link 1</span></div>
<div class="a p" style="left:4.5px;top:1210.6px;width:90.5px;height:34.4px;background:#616161;border-radius:17.2px;box-shadow:inset 0 0 0 1.5px #a0a0a0,0 0 0 1px rgba(0,0,0,.35);"><span style="font-size:16.5px;color:#f2f2f2;letter-spacing:-0.100px;transform:translate(0.07px,0.55px);">Link 2</span></div>
<div class="a p" style="left:503px;top:1090px;width:90.5px;height:33.3px;background:#0766b0;border-radius:16.65px;box-shadow:inset 0 0 0 1.5px #a0a0a0,0 0 0 1px rgba(0,0,0,.35);"><span style="font-size:16.5px;color:#f2f2f2;letter-spacing:0.300px;transform:translate(0.00px,0.80px);">All</span></div>
<div class="a p" style="left:502.7px;top:1130px;width:45.6px;height:34px;background:#616161;border-radius:17px;box-shadow:inset 0 0 0 1.5px #a0a0a0,0 0 0 1px rgba(0,0,0,.35);"><span style="font-size:17px;color:#f2f2f2;letter-spacing:0.000px;transform:translate(0.00px,0.80px);">1</span></div>
<div class="a p" style="left:550.7px;top:1130px;width:45.1px;height:34px;background:#616161;border-radius:17px;box-shadow:inset 0 0 0 1.5px #a0a0a0,0 0 0 1px rgba(0,0,0,.35);"><span style="font-size:17px;color:#f2f2f2;letter-spacing:0.000px;transform:translate(0.00px,0.80px);">2</span></div>
<div class="a p" style="left:502.7px;top:1170.35px;width:45.6px;height:34px;background:#616161;border-radius:17px;box-shadow:inset 0 0 0 1.5px #a0a0a0,0 0 0 1px rgba(0,0,0,.35);"><span style="font-size:17px;color:#f2f2f2;letter-spacing:0.000px;transform:translate(0.00px,0.80px);">3</span></div>
<div class="a p" style="left:550.7px;top:1170.35px;width:45.1px;height:34px;background:#616161;border-radius:17px;box-shadow:inset 0 0 0 1.5px #a0a0a0,0 0 0 1px rgba(0,0,0,.35);"><span style="font-size:17px;color:#f2f2f2;letter-spacing:0.000px;transform:translate(0.00px,0.80px);">4</span></div>
<div class="a p" style="left:502.7px;top:1210.7px;width:45.6px;height:34px;background:#616161;border-radius:17px;box-shadow:inset 0 0 0 1.5px #a0a0a0,0 0 0 1px rgba(0,0,0,.35);"><span style="font-size:17px;color:#f2f2f2;letter-spacing:0.000px;transform:translate(0.00px,0.80px);">5</span></div>
<div class="a p" style="left:550.7px;top:1210.7px;width:45.1px;height:34px;background:#616161;border-radius:17px;box-shadow:inset 0 0 0 1.5px #a0a0a0,0 0 0 1px rgba(0,0,0,.35);"><span style="font-size:17px;color:#f2f2f2;letter-spacing:0.000px;transform:translate(0.00px,0.80px);">6</span></div>
<div class="a p" style="left:502.7px;top:1251.05px;width:45.6px;height:34px;background:#616161;border-radius:17px;box-shadow:inset 0 0 0 1.5px #a0a0a0,0 0 0 1px rgba(0,0,0,.35);"><span style="font-size:17px;color:#f2f2f2;letter-spacing:0.000px;transform:translate(0.00px,0.80px);">7</span></div>
<div class="a p" style="left:550.7px;top:1251.05px;width:45.1px;height:34px;background:#616161;border-radius:17px;box-shadow:inset 0 0 0 1.5px #a0a0a0,0 0 0 1px rgba(0,0,0,.35);"><span style="font-size:17px;color:#f2f2f2;letter-spacing:0.000px;transform:translate(0.00px,0.80px);">8</span></div>
<div class="a t" style="left:612.3px;top:1104.8px;height:20.4px;line-height:20.4px;font-size:17px;color:#f2f2f2;letter-spacing:-0.053px;font-weight:400;">TX Invert</div>
<div class="a t" style="left:611.3px;top:1140.8px;height:20.4px;line-height:20.4px;font-size:17px;color:#f2f2f2;letter-spacing:-0.150px;font-weight:400;">Pre Cursor1</div>
<div class="a t" style="left:611.7px;top:1177.36px;height:20.4px;line-height:20.4px;font-size:17px;color:#f2f2f2;letter-spacing:1.000px;font-weight:400;">Amplitude</div>
<div class="a t" style="left:611.2px;top:1213.8px;height:20.4px;line-height:20.4px;font-size:17px;color:#f2f2f2;letter-spacing:-0.058px;font-weight:400;">Post Cursor1</div>
<div class="a t" style="left:611.1px;top:1250.27px;height:20.4px;line-height:20.4px;font-size:17px;color:#f2f2f2;letter-spacing:0.066px;font-weight:400;">Upper Eye</div>
<div class="a t" style="left:1073.5px;top:1104.8px;height:20.4px;line-height:20.4px;font-size:17px;color:#f2f2f2;letter-spacing:-0.066px;font-weight:400;">RX Invert</div>
<div class="a t" style="left:1073.5px;top:1140.8px;height:20.4px;line-height:20.4px;font-size:17px;color:#f2f2f2;letter-spacing:0.250px;font-weight:400;">Pre Cursor2</div>
<div class="a t" style="left:1073.45px;top:1213.8px;height:20.4px;line-height:20.4px;font-size:17px;color:#f2f2f2;letter-spacing:0.325px;font-weight:400;">Post Cursor2</div>
<div class="a t" style="left:1306px;top:1250.27px;height:20.4px;line-height:20.4px;font-size:17px;color:#f2f2f2;letter-spacing:0.000px;font-weight:400;">Lower Eye</div>
<div class="a t" style="left:1538.1px;top:1140.8px;height:20.4px;line-height:20.4px;font-size:17px;color:#f2f2f2;letter-spacing:0.350px;font-weight:400;">Pre Cursor3</div>
<div class="a t" style="left:1537.9px;top:1213.8px;height:20.4px;line-height:20.4px;font-size:17px;color:#f2f2f2;letter-spacing:0.340px;font-weight:400;">Post Cursor3</div>
<div class="a p" style="left:730.5px;top:1100.3px;width:65.5px;height:26.1px;background:#464646;border-radius:13.05px;"><span style="font-size:18px;color:#f2f2f2;letter-spacing:0.300px;transform:translate(0.00px,0.80px);">On</span></div>
<div class="a p" style="left:809.3px;top:1100.3px;width:66.5px;height:26.1px;background:#0a5e9c;border-radius:13.05px;"><span style="font-size:18px;color:#f2f2f2;letter-spacing:0.300px;transform:translate(0.00px,0.80px);">Off</span></div>
<div class="a p" style="left:1193.8px;top:1100.5px;width:66.2px;height:25.8px;background:#464646;border-radius:12.9px;"><span style="font-size:18px;color:#f2f2f2;letter-spacing:0.300px;transform:translate(0.00px,0.80px);">On</span></div>
<div class="a p" style="left:1272.5px;top:1100.5px;width:67px;height:25.8px;background:#0a5e9c;border-radius:12.9px;"><span style="font-size:18px;color:#f2f2f2;letter-spacing:0.300px;transform:translate(0.00px,0.80px);">Off</span></div>
<div class="a" style="left:742.5px;top:1147.6px;width:153.0px;height:4.8px;border-radius:2.4px;background:#7b7b7b;box-shadow:0 0 0 0.6px #1f1c1c;"></div>
<div class="a" style="left:741.2px;top:1146.2px;width:77.7px;height:7.6px;border-radius:3.8px 0 0 3.8px;background:#0a6ab5;box-shadow:0 0 0 0.6px #2a1a14;"></div>
<div class="a" style="left:811.4px;top:1142.5px;width:15px;height:15px;border-radius:50%;background:#0a6ab2;box-shadow:0 0 0 0.7px #2a1a14;"></div>
<div class="a" style="left:742.5px;top:1183.8px;width:1080.0px;height:4.8px;border-radius:2.4px;background:#7b7b7b;box-shadow:0 0 0 0.6px #1f1c1c;"></div>
<div class="a" style="left:741.2px;top:1182.4px;width:433.3px;height:7.6px;border-radius:3.8px 0 0 3.8px;background:#0a6ab5;box-shadow:0 0 0 0.6px #2a1a14;"></div>
<div class="a" style="left:1167.0px;top:1178.7px;width:15px;height:15px;border-radius:50%;background:#0a6ab2;box-shadow:0 0 0 0.7px #2a1a14;"></div>
<div class="a" style="left:742.5px;top:1220.2px;width:153.0px;height:4.8px;border-radius:2.4px;background:#7b7b7b;box-shadow:0 0 0 0.6px #1f1c1c;"></div>
<div class="a" style="left:741.2px;top:1218.8px;width:85.6px;height:7.6px;border-radius:3.8px 0 0 3.8px;background:#0a6ab5;box-shadow:0 0 0 0.6px #2a1a14;"></div>
<div class="a" style="left:819.3px;top:1215.1px;width:15px;height:15px;border-radius:50%;background:#0a6ab2;box-shadow:0 0 0 0.7px #2a1a14;"></div>
<div class="a" style="left:742.5px;top:1256.7px;width:385.0px;height:4.8px;border-radius:2.4px;background:#7b7b7b;box-shadow:0 0 0 0.6px #1f1c1c;"></div>
<div class="a" style="left:741.2px;top:1255.3px;width:193.7px;height:7.6px;border-radius:3.8px 0 0 3.8px;background:#0a6ab5;box-shadow:0 0 0 0.6px #2a1a14;"></div>
<div class="a" style="left:927.4px;top:1251.6px;width:15px;height:15px;border-radius:50%;background:#0a6ab2;box-shadow:0 0 0 0.7px #2a1a14;"></div>
<div class="a" style="left:1206.5px;top:1147.6px;width:152.0px;height:4.8px;border-radius:2.4px;background:#7b7b7b;box-shadow:0 0 0 0.6px #1f1c1c;"></div>
<div class="a" style="left:1205.2px;top:1146.2px;width:76.8px;height:7.6px;border-radius:3.8px 0 0 3.8px;background:#0a6ab5;box-shadow:0 0 0 0.6px #2a1a14;"></div>
<div class="a" style="left:1274.5px;top:1142.5px;width:15px;height:15px;border-radius:50%;background:#0a6ab2;box-shadow:0 0 0 0.7px #2a1a14;"></div>
<div class="a" style="left:1206.5px;top:1220.2px;width:152.0px;height:4.8px;border-radius:2.4px;background:#7b7b7b;box-shadow:0 0 0 0.6px #1f1c1c;"></div>
<div class="a" style="left:1205.2px;top:1218.8px;width:76.8px;height:7.6px;border-radius:3.8px 0 0 3.8px;background:#0a6ab5;box-shadow:0 0 0 0.6px #2a1a14;"></div>
<div class="a" style="left:1274.5px;top:1215.1px;width:15px;height:15px;border-radius:50%;background:#0a6ab2;box-shadow:0 0 0 0.7px #2a1a14;"></div>
<div class="a" style="left:1670.5px;top:1147.6px;width:152.0px;height:4.8px;border-radius:2.4px;background:#7b7b7b;box-shadow:0 0 0 0.6px #1f1c1c;"></div>
<div class="a" style="left:1669.2px;top:1146.2px;width:72.8px;height:7.6px;border-radius:3.8px 0 0 3.8px;background:#0a6ab5;box-shadow:0 0 0 0.6px #2a1a14;"></div>
<div class="a" style="left:1734.5px;top:1142.5px;width:15px;height:15px;border-radius:50%;background:#0a6ab2;box-shadow:0 0 0 0.7px #2a1a14;"></div>
<div class="a" style="left:1670.5px;top:1220.2px;width:152.0px;height:4.8px;border-radius:2.4px;background:#7b7b7b;box-shadow:0 0 0 0.6px #1f1c1c;"></div>
<div class="a" style="left:1669.2px;top:1218.8px;width:76.4px;height:7.6px;border-radius:3.8px 0 0 3.8px;background:#0a6ab5;box-shadow:0 0 0 0.6px #2a1a14;"></div>
<div class="a" style="left:1738.1px;top:1215.1px;width:15px;height:15px;border-radius:50%;background:#0a6ab2;box-shadow:0 0 0 0.7px #2a1a14;"></div>
<div class="a" style="left:1437.5px;top:1256.7px;width:385.0px;height:4.8px;border-radius:2.4px;background:#7b7b7b;box-shadow:0 0 0 0.6px #1f1c1c;"></div>
<div class="a" style="left:1436.2px;top:1255.3px;width:194.2px;height:7.6px;border-radius:3.8px 0 0 3.8px;background:#0a6ab5;box-shadow:0 0 0 0.6px #2a1a14;"></div>
<div class="a" style="left:1622.9px;top:1251.6px;width:15px;height:15px;border-radius:50%;background:#0a6ab2;box-shadow:0 0 0 0.7px #2a1a14;"></div>
<div class="a p" style="left:927px;top:1133.8px;width:91px;height:32.4px;background:#2b2b2e;border-radius:16.2px;box-shadow:inset 0 0 0 1.5px #8d8993;"><span style="font-size:17px;color:#f2f2f2;letter-spacing:0.300px;transform:translate(0.00px,0.80px);">0.00</span></div>
<div class="a p" style="left:927px;top:1206.4px;width:91px;height:32.4px;background:#2b2b2e;border-radius:16.2px;box-shadow:inset 0 0 0 1.5px #8d8993;"><span style="font-size:17px;color:#f2f2f2;letter-spacing:0.300px;transform:translate(0.00px,0.80px);">10.00</span></div>
<div class="a p" style="left:1159px;top:1242.9px;width:91px;height:32.4px;background:#2b2b2e;border-radius:16.2px;box-shadow:inset 0 0 0 1.5px #8d8993;"><span style="font-size:17px;color:#f2f2f2;letter-spacing:0.300px;transform:translate(0.00px,0.80px);">0.00</span></div>
<div class="a p" style="left:1390.5px;top:1133.8px;width:91.5px;height:32.4px;background:#2b2b2e;border-radius:16.2px;box-shadow:inset 0 0 0 1.5px #8d8993;"><span style="font-size:17px;color:#f2f2f2;letter-spacing:0.300px;transform:translate(0.00px,0.80px);">0.00</span></div>
<div class="a p" style="left:1390.5px;top:1206.4px;width:91.5px;height:32.4px;background:#2b2b2e;border-radius:16.2px;box-shadow:inset 0 0 0 1.5px #8d8993;"><span style="font-size:17px;color:#f2f2f2;letter-spacing:0.300px;transform:translate(0.00px,0.80px);">0.00</span></div>
<div class="a p" style="left:1854px;top:1133.8px;width:91.2px;height:32.4px;background:#2b2b2e;border-radius:16.2px;box-shadow:inset 0 0 0 1.5px #8d8993;"><span style="font-size:17px;color:#f2f2f2;letter-spacing:0.300px;transform:translate(0.00px,0.80px);">-5.00</span></div>
<div class="a p" style="left:1854px;top:1170px;width:91.2px;height:32.4px;background:#2b2b2e;border-radius:16.2px;box-shadow:inset 0 0 0 1.5px #8d8993;"><span style="font-size:17px;color:#f2f2f2;letter-spacing:0.300px;transform:translate(0.00px,0.80px);">400</span></div>
<div class="a p" style="left:1854px;top:1206.4px;width:91.2px;height:32.4px;background:#2b2b2e;border-radius:16.2px;box-shadow:inset 0 0 0 1.5px #8d8993;"><span style="font-size:17px;color:#f2f2f2;letter-spacing:0.300px;transform:translate(0.00px,0.80px);">0.00</span></div>
<div class="a p" style="left:1854px;top:1242.9px;width:91.2px;height:32.4px;background:#2b2b2e;border-radius:16.2px;box-shadow:inset 0 0 0 1.5px #8d8993;"><span style="font-size:17px;color:#f2f2f2;letter-spacing:0.300px;transform:translate(0.00px,0.80px);">0.00</span></div>
<div class="a t" style="left:746px;width:600px;text-align:center;top:1141.6px;height:19.2px;line-height:19.2px;font-size:16px;color:#8a8a8a;letter-spacing:0.000px;font-weight:400;">%</div>
<div class="a t" style="left:746px;width:600px;text-align:center;top:1214.2px;height:19.2px;line-height:19.2px;font-size:16px;color:#8a8a8a;letter-spacing:0.000px;font-weight:400;">%</div>
<div class="a t" style="left:977.5px;width:600px;text-align:center;top:1250.7px;height:19.2px;line-height:19.2px;font-size:16px;color:#8a8a8a;letter-spacing:0.000px;font-weight:400;">%</div>
<div class="a t" style="left:1209.5px;width:600px;text-align:center;top:1141.6px;height:19.2px;line-height:19.2px;font-size:16px;color:#8a8a8a;letter-spacing:0.000px;font-weight:400;">%</div>
<div class="a t" style="left:1209.5px;width:600px;text-align:center;top:1214.2px;height:19.2px;line-height:19.2px;font-size:16px;color:#8a8a8a;letter-spacing:0.000px;font-weight:400;">%</div>
<div class="a t" style="left:1673px;width:600px;text-align:center;top:1141.6px;height:19.2px;line-height:19.2px;font-size:16px;color:#8a8a8a;letter-spacing:0.000px;font-weight:400;">%</div>
<div class="a t" style="left:1665.5px;width:600px;text-align:center;top:1177.8px;height:19.2px;line-height:19.2px;font-size:16px;color:#8a8a8a;letter-spacing:0.300px;font-weight:400;">mV</div>
<div class="a t" style="left:1673px;width:600px;text-align:center;top:1214.2px;height:19.2px;line-height:19.2px;font-size:16px;color:#8a8a8a;letter-spacing:0.000px;font-weight:400;">%</div>
<div class="a t" style="left:1673px;width:600px;text-align:center;top:1250.7px;height:19.2px;line-height:19.2px;font-size:16px;color:#8a8a8a;letter-spacing:0.000px;font-weight:400;">%</div>
<div class="a p" style="left:1px;top:1290px;width:999px;height:23.6px;background:#0766b0;border-radius:0px;box-shadow:inset 0 0 0 1.5px #a0a0a0,0 0 0 1px rgba(0,0,0,.35);"><span style="font-size:16.5px;color:#f2f2f2;letter-spacing:0.763px;transform:translate(0.18px,0.64px);">Rx/Tx Configuration</span></div>
<div class="a p" style="left:1000px;top:1290px;width:1000px;height:23.6px;background:#504f55;border-radius:0px;box-shadow:inset 0 0 0 1.5px #a0a0a0,0 0 0 1px rgba(0,0,0,.35);"><span style="font-size:16.5px;color:#f2f2f2;letter-spacing:0.543px;transform:translate(0.00px,0.64px);">Error Injection</span></div>
<div class="a" style="left:1622px;top:1318.6px;width:329px;height:21px;background:#2196f3;overflow:hidden;"><div style="position:absolute;left:0;top:5px;width:329px;text-align:center;font-size:19px;line-height:22px;color:#1b1b1b;letter-spacing:0;">100%</div></div>
<div class="a" style="left:1971px;top:1320.4px;width:20px;height:20px;border-radius:50%;background:#8cbff9;"></div>
<div class="a" style="left:0px;top:1345.5px;width:2000px;height:1px;background:#1a1a1c;"></div>
<div class="a" style="left:0px;top:1346.5px;width:2000px;height:1.5px;background:#bdbdbd;"></div>
</body></html>
